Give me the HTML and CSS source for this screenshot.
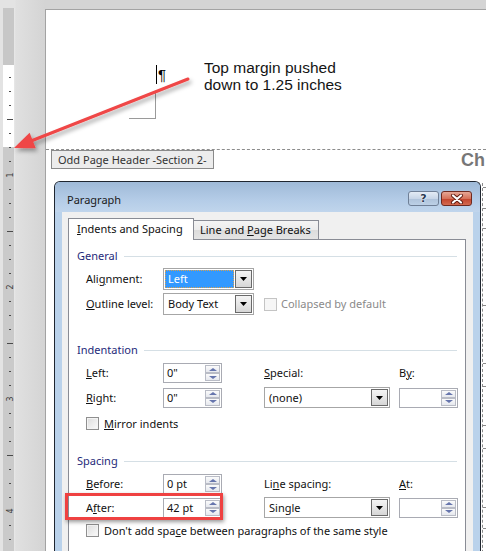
FILE: index.html
```html
<!DOCTYPE html>
<html>
<head>
<meta charset="utf-8">
<title>Paragraph</title>
<link rel="stylesheet" href="styles.css">
</head>
<body>
<div class="screen">
  <div class="gutter">
    <svg class="ruler" width="12" height="543" viewBox="0 0 12 543">
      <rect x="0" y="0" width="12" height="57" fill="#c7c7c7"/>
      <rect x="0" y="57" width="12" height="82" fill="#ffffff"/>
      <rect x="0" y="139" width="12" height="404" fill="#cacaca"/>
      <rect x="11" y="0" width="1" height="543" fill="#e6e6e6"/>
      <g fill="#4a4a4a">
        <rect x="6" y="69" width="2" height="1"/><rect x="6" y="83" width="2" height="1"/><rect x="6" y="97" width="2" height="1"/>
        <rect x="4" y="111" width="6" height="1"/><rect x="6" y="125" width="2" height="1"/><rect x="6" y="139" width="2" height="1"/>
        <rect x="6" y="153" width="2" height="1"/>
        <rect x="6" y="181" width="2" height="1"/><rect x="6" y="195" width="2" height="1"/><rect x="6" y="209" width="2" height="1"/>
        <rect x="4" y="223" width="6" height="1"/><rect x="6" y="237" width="2" height="1"/><rect x="6" y="251" width="2" height="1"/>
        <rect x="6" y="265" width="2" height="1"/>
        <rect x="6" y="293" width="2" height="1"/><rect x="6" y="307" width="2" height="1"/><rect x="6" y="321" width="2" height="1"/>
        <rect x="4" y="335" width="6" height="1"/><rect x="6" y="349" width="2" height="1"/><rect x="6" y="363" width="2" height="1"/>
        <rect x="6" y="377" width="2" height="1"/>
        <rect x="6" y="405" width="2" height="1"/><rect x="6" y="419" width="2" height="1"/><rect x="6" y="433" width="2" height="1"/>
        <rect x="4" y="447" width="6" height="1"/><rect x="6" y="461" width="2" height="1"/><rect x="6" y="475" width="2" height="1"/>
        <rect x="6" y="489" width="2" height="1"/>
        <rect x="6" y="517" width="2" height="1"/><rect x="6" y="531" width="2" height="1"/>
      </g>
      <g class="rnum" fill="#3c3c3c">
        <text transform="translate(10,167) rotate(-90)" text-anchor="middle">1</text>
        <text transform="translate(10,279) rotate(-90)" text-anchor="middle">2</text>
        <text transform="translate(10,391) rotate(-90)" text-anchor="middle">3</text>
        <text transform="translate(10,503) rotate(-90)" text-anchor="middle">4</text>
      </g>
    </svg>
  </div>

  <div class="page">
    <div class="topmargin">
      <div class="markcol">
        <div class="pil"><span class="caret"></span><span class="pilcrow">¶</span></div>
        <div class="corner"></div>
      </div>
      <div class="note">Top margin pushed<br>down to 1.25 inches</div>
    </div>

    <div class="headerbar">
      <div class="hdrlabel">Odd Page Header -Section 2-</div>
      <div class="ch">Ch</div>
    </div>

    <div class="dlgrow">
      <div class="dialog">
        <div class="titlebar">
          <span class="title">Paragraph</span>
          <div class="tbtns">
            <span class="tb help">?</span>
            <span class="tb close"><svg width="14" height="10" viewBox="0 0 14 10"><path d="M3 1.5 L11 8.5 M11 1.5 L3 8.5" stroke="#5e1a10" stroke-width="4" stroke-linecap="round" fill="none"/><path d="M3 1.5 L11 8.5 M11 1.5 L3 8.5" stroke="#ffffff" stroke-width="2.2" stroke-linecap="round" fill="none"/></svg></span>
          </div>
        </div>
        <div class="client">
          <div class="tabs">
            <div class="tab sel"><u>I</u>ndents and Spacing</div>
            <div class="tab">Line and <u>P</u>age Breaks</div>
          </div>
          <div class="panel">
            <div class="gh">General</div>
            <div class="grp ggrid">
              <span class="lbl">Ali<u>g</u>nment:</span>
              <div class="dd w91"><span class="val sel">Left</span><span class="arr"><svg width="7" height="4" viewBox="0 0 7 4"><polygon points="0,0 7,0 3.5,4" fill="#000"/></svg></span></div>
              <span></span>
              <span class="lbl"><u>O</u>utline level:</span>
              <div class="dd w91"><span class="val">Body Text</span><span class="arr"><svg width="7" height="4" viewBox="0 0 7 4"><polygon points="0,0 7,0 3.5,4" fill="#000"/></svg></span></div>
              <div class="cbrow"><span class="cb dis"></span><span class="distext">Collapsed by default</span></div>
            </div>

            <div class="gh gap28">Indentation</div>
            <div class="grp igrid">
              <span class="lbl"><u>L</u>eft:</span>
              <div class="spin"><span class="val">0"</span><span class="btns"><span class="sb up"></span><span class="sb dn"></span></span></div>
              <span class="lbl"><u>S</u>pecial:</span>
              <span class="lbl">B<u>y</u>:</span>
              <span class="lbl"><u>R</u>ight:</span>
              <div class="spin"><span class="val">0"</span><span class="btns"><span class="sb up"></span><span class="sb dn"></span></span></div>
              <div class="dd w126"><span class="val">(none)</span><span class="arr"><svg width="7" height="4" viewBox="0 0 7 4"><polygon points="0,0 7,0 3.5,4" fill="#000"/></svg></span></div>
              <div class="spin"><span class="val"></span><span class="btns"><span class="sb up"></span><span class="sb dn"></span></span></div>
            </div>
            <div class="grp cbrow mirror"><span class="cb"></span><span><u>M</u>irror indents</span></div>

            <div class="gh gap24">Spacing</div>
            <div class="grp sgrid">
              <span class="lbl"><u>B</u>efore:</span>
              <div class="spin"><span class="val">0 pt</span><span class="btns"><span class="sb up"></span><span class="sb dn"></span></span></div>
              <span class="lbl">Li<u>n</u>e spacing:</span>
              <span class="lbl"><u>A</u>t:</span>
              <span class="lbl">A<u>f</u>ter:</span>
              <div class="spin"><span class="val">42 pt</span><span class="btns"><span class="sb up"></span><span class="sb dn"></span></span></div>
              <div class="dd w126"><span class="val">Single</span><span class="arr"><svg width="7" height="4" viewBox="0 0 7 4"><polygon points="0,0 7,0 3.5,4" fill="#000"/></svg></span></div>
              <div class="spin"><span class="val"></span><span class="btns"><span class="sb up"></span><span class="sb dn"></span></span></div>
              <div class="hl"></div>
            </div>
            <div class="grp cbrow dontadd"><span class="cb"></span><span>Don't add spa<u>c</u>e between paragraphs of the same style</span></div>
          </div>
        </div>
      </div>
      <div class="textbound">
        <svg width="4" height="368" viewBox="0 0 4 368">
          <g fill="#8a8a8a">
            <rect x="0" y="4" width="4" height="1"/>
            <rect x="0" y="25" width="4" height="1"/>
            <rect x="0" y="45" width="4" height="1"/>
            <rect x="0" y="122" width="4" height="1"/>
            <rect x="0" y="180" width="4" height="1"/>
            <rect x="0" y="203" width="4" height="1"/>
            <rect x="0" y="242" width="4" height="1"/>
            <rect x="0" y="265" width="4" height="1"/>
            <rect x="0" y="324" width="4" height="1"/>
            <rect x="0" y="345" width="4" height="1"/>
          </g>
        </svg>
      </div>
    </div>
  </div>

  <svg class="arrow" width="486" height="551" viewBox="0 0 486 551">
    <defs>
      <filter id="sh" x="-20%" y="-40%" width="140%" height="180%">
        <feDropShadow dx="2" dy="3" stdDeviation="2" flood-color="#000" flood-opacity="0.35"/>
      </filter>
    </defs>
    <g filter="url(#sh)">
      <line x1="188" y1="79" x2="31" y2="141" stroke="#ef4646" stroke-width="3" stroke-linecap="round"/>
      <polygon points="14,148 29.6,132.8 35.8,148.2" fill="#ef4646"/>
    </g>
  </svg>
</div>
</body>
</html>
```

FILE: styles.css
```css
* { box-sizing: border-box; margin: 0; padding: 0; }
html, body { width: 486px; height: 551px; overflow: hidden; }
body { background: #e2e2e2; font-family: "Noto Sans", "DejaVu Sans", sans-serif; }

.screen {
  position: relative;
  display: flex;
  width: 486px;
  height: 551px;
  overflow: hidden;
  background: linear-gradient(to right, #e3e3e3 0, #e3e3e3 15px, #e0e0e0 16px, #d4d4d4 45px);
}

/* left gutter with vertical ruler */
.gutter { width: 45px; flex: none; padding: 8px 0 0 3px; }
.ruler { display: block; }
.rnum { font: 8px "DejaVu Sans", sans-serif; }

/* document page */
.page {
  flex: 1;
  min-width: 0;
  margin-top: 9px;
  background: #fff;
  border-left: 1px solid #a3a3a3;
  border-top: 1px solid #a3a3a3;
  display: flex;
  flex-direction: column;
}

.topmargin {
  height: 140px;
  flex: none;
  border-bottom: 1px dashed #8c8c8c;
  display: flex;
  align-items: flex-start;
  padding: 49px 0 0 83px;
}
.markcol { width: 75px; flex: none; padding-top: 6px; }
.pil { display: flex; align-items: flex-start; margin-left: 27px; height: 19px; }
.caret { width: 1px; height: 19px; background: #000; }
.pilcrow { font: 15px/19px "Liberation Sans", sans-serif; color: #000; margin-left: 1px; }
.corner {
  width: 27px;
  height: 26px;
  margin-top: 9px;
  border-right: 1px solid #9a9a9a;
  border-bottom: 1px solid #9a9a9a;
}
.note { font: 15.5px/17px "Liberation Sans", Arial, sans-serif; color: #141414; }

.headerbar {
  height: 31px;
  flex: none;
  display: flex;
  align-items: flex-start;
  padding-left: 5px;
}
.hdrlabel {
  height: 19px;
  border: 1px solid #8a8a8a;
  background: #ececec;
  font-size: 11px;
  line-height: 17px;
  padding: 0 6px;
  color: #333;
}
.ch {
  margin-left: auto;
  margin-right: 1px;
  font: bold 18px/20px "Liberation Sans", Arial, sans-serif;
  color: #777;
}

/* dialog */
.dlgrow { display: flex; flex: 1; }
.dialog {
  width: 427px;
  flex: none;
  margin-left: 8px;
  border: 1px solid #1f2630;
  border-bottom: none;
  border-radius: 6px 6px 0 0;
  background: #bad2eb;
  font-size: 11px;
  color: #111;
  display: flex;
  flex-direction: column;
}
.titlebar {
  height: 30px;
  display: flex;
  align-items: flex-start;
  padding: 0 8px 0 12px;
  background: linear-gradient(#9fbad8, #b4cce7 60%, #c0d5ec);
  border-radius: 5px 5px 0 0;
}
.title { margin-top: 11px; line-height: 14px; color: #1a1a1a; }
.tbtns { margin-left: auto; margin-top: 9px; display: flex; gap: 2px; }
.tb {
  width: 31px;
  height: 15px;
  border-radius: 3px;
  display: flex;
  align-items: center;
  justify-content: center;
}
.help {
  border: 1px solid #6f7f96;
  background: linear-gradient(#e3ebf5, #c8d6e8 50%, #aec2da 51%, #bcd0e6);
  font: bold 11px/13px "DejaVu Sans", sans-serif;
  color: #2a3a52;
  text-shadow: 0 0 2px #fff, 0 0 1px #fff;
}
.close {
  border: 1px solid #6e2a20;
  background: linear-gradient(#e6a796, #d6725a 50%, #c2432b 51%, #d46a50);
}
.close svg { display: block; }

.client {
  flex: 1;
  background: #f0f0f0;
  margin: 0 7px;
  padding: 6px 7px 0 6px;
  display: flex;
  flex-direction: column;
}
.tabs { display: flex; align-items: flex-end; height: 21px; }
.tab {
  height: 19px;
  border: 1px solid #898c95;
  border-bottom: none;
  padding: 0 7px 0 6px;
  line-height: 17px;
  background: linear-gradient(#f4f4f4, #ececec 50%, #dcdcdc 51%, #e4e4e4);
  color: #111;
  margin-left: -1px;
}
.tab.sel {
  height: 22px;
  margin-left: 0;
  margin-bottom: -1px;
  position: relative;
  z-index: 1;
  background: #fff;
  padding: 0 9px 0 8px;
  line-height: 19px;
  width: 126px;
}
.tab u, .lbl u, .cbrow u { text-underline-offset: 1px; }

.panel {
  flex: 1;
  background: #fff;
  border: 1px solid #898c95;
  padding: 9px 8px 40px 8px;
}

.gh {
  display: flex;
  align-items: center;
  height: 14px;
  line-height: 14px;
  color: #1e2a7a;
}
.gh::after {
  content: "";
  flex: 1;
  height: 1px;
  background: #d5dfe5;
  margin-left: 6px;
}
.gap28 { margin-top: 28px; }
.gap24 { margin-top: 24px; }

.grp { padding-left: 9px; }
.ggrid {
  display: grid;
  grid-template-columns: 77px 101px auto;
  grid-template-rows: 22px 22px;
  row-gap: 3px;
  align-items: center;
  margin-top: 5px;
}
.igrid, .sgrid {
  display: grid;
  grid-template-columns: 77px 101px 135px 59px;
  grid-template-rows: 20px 21px;
  align-items: center;
  margin-top: 6px;
}
.igrid { row-gap: 4px; }
.sgrid { row-gap: 3px; position: relative; }
.lbl { line-height: 14px; color: #111; }

/* dropdowns */
.dd {
  display: flex;
  height: 22px;
  border: 1px solid #a6a6a6;
  background: #fff;
  padding: 1px;
}
.igrid .dd, .sgrid .dd { height: 21px; }
.w91 { width: 91px; }
.w126 { width: 126px; }
.dd .val { flex: 1; padding-left: 3px; line-height: 17px; color: #111; }
.dd .val.sel {
  background: #3399ff;
  color: #fff;
  outline: 1px dotted #d8a050;
  outline-offset: -1px;
  margin-right: 1px;
}
.dd .arr {
  width: 17px;
  flex: none;
  border: 1px solid #6a6a6a;
  background: linear-gradient(#f4f4f4, #e6e6e6 50%, #d6d6d6);
  display: flex;
  align-items: center;
  justify-content: center;
}
.dd .arr svg { display: block; }

/* spin boxes */
.spin {
  width: 59px;
  height: 20px;
  border: 1px solid #a9abb3;
  background: #fff;
  display: flex;
}
.spin .val { flex: 1; padding-left: 3px; line-height: 18px; color: #111; }
.spin .btns {
  width: 16px;
  flex: none;
  display: flex;
  flex-direction: column;
  padding: 1px 1px 1px 0;
}
.sb {
  flex: 1;
  border: 1px solid #b9bcc6;
  background: linear-gradient(#fbfbfb, #e6e8ee);
  display: flex;
  align-items: center;
  justify-content: center;
}
.sb.up::before {
  content: "";
  border-left: 4px solid transparent;
  border-right: 4px solid transparent;
  border-bottom: 3px solid #6675ad;
}
.sb.dn::before {
  content: "";
  border-left: 4px solid transparent;
  border-right: 4px solid transparent;
  border-top: 3px solid #6675ad;
}

/* checkboxes */
.cbrow { display: flex; align-items: center; gap: 5px; line-height: 14px; }
.ggrid .cbrow { gap: 4px; }
.cb {
  width: 13px;
  height: 13px;
  flex: none;
  border: 1px solid #8f8f8f;
  background: linear-gradient(135deg, #dcdcdc, #fbfbfb);
  box-shadow: inset 0 0 0 1px #f4f4f4;
}
.cb.dis { border-color: #c4c4c4; background: #f6f6f6; box-shadow: none; }
.distext { color: #8a8a8a; }
.mirror { margin-top: 9px; height: 13px; }
.dontadd { margin-top: 6px; height: 13px; }

/* red highlight around "After" */
.hl {
  position: absolute;
  left: -12px;
  top: 19px;
  width: 158px;
  height: 27px;
  border: 3px solid #ef4141;
  box-shadow: 1px 2px 4px rgba(0, 0, 0, 0.4);
  pointer-events: none;
}

/* text boundary to right of dialog */
.textbound {
  flex: 1;
  margin-left: 1px;
  margin-top: 2px;
  border-left: 1px dashed #8a8a8a;
}
.textbound svg { display: block; }

/* annotation arrow overlay */
.arrow { position: absolute; left: 0; top: 0; pointer-events: none; }
```
